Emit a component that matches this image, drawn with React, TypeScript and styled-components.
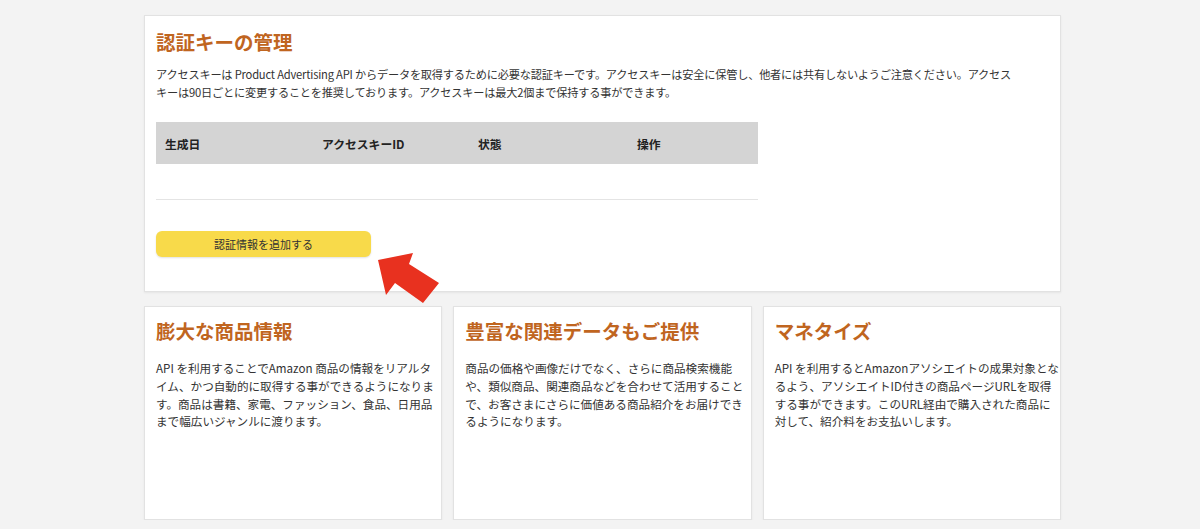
import React from 'react';
import styled, { createGlobalStyle } from 'styled-components';

const GlobalStyle = createGlobalStyle`
  html, body {
    margin: 0;
    padding: 0;
    background: #f3f3f3;
    font-family: "Noto Sans CJK JP", "Noto Sans", sans-serif;
    color: #333;
  }
`;

const Page = styled.div`
  padding: 15px 0 0 144px;
`;

const Container = styled.div`
  position: relative;
  width: 917px;
`;

const Card = styled.section`
  box-sizing: border-box;
  min-width: 0;
  background: #fff;
  border: 1px solid #e2e2e2;
  box-shadow: 0 1px 2px rgba(0, 0, 0, 0.06);
`;

const MainCard = styled(Card)`
  height: 277px;
  padding: 11px 11px 0;
`;

const Title = styled.h2`
  margin: 0;
  font-size: 19.5px;
  line-height: 30px;
  font-weight: 700;
  color: #c0651f;
`;

const Lead = styled.p`
  margin: 9px 0 0;
  font-size: 11.2px;
  line-height: 17.5px;
  letter-spacing: -0.2px;
  white-space: nowrap;
`;

const Table = styled.div`
  width: 602px;
  margin-top: 21px;
  border-bottom: 1px solid #e4e4e4;
`;

const HeadRow = styled.div`
  display: grid;
  grid-template-columns: 157px 156px 159px 1fr;
  height: 42px;
  align-items: center;
  background: #d4d4d4;
`;

const HeadCell = styled.div`
  padding-left: 9px;
  font-size: 11.8px;
  font-weight: 700;
  color: #222;
`;

const EmptyRow = styled.div`
  height: 35px;
`;

const AddButton = styled.button`
  display: block;
  width: 215px;
  height: 26px;
  margin-top: 31px;
  border: none;
  border-radius: 6px;
  background: #f8da4a;
  box-shadow: 0 1px 2px rgba(0, 0, 0, 0.12);
  font-family: inherit;
  font-size: 11px;
  color: #333;
  cursor: pointer;
`;

const Arrow = styled.svg`
  position: absolute;
  left: 226px;
  top: 233px;
  width: 75px;
  height: 60px;
`;

const Features = styled.div`
  display: grid;
  grid-template-columns: repeat(3, minmax(0, 1fr));
  gap: 11px;
  margin-top: 14px;
`;

const FeatureCard = styled(Card)`
  height: 214px;
  padding: 9px 11px 0;
  overflow: hidden;
`;

const Body = styled.p`
  margin: 14px 0 0;
  font-size: 11.6px;
  line-height: 17.8px;
  white-space: nowrap;
`;

const features = [
  {
    title: '膨大な商品情報',
    lines: [
      'API を利用することでAmazon 商品の情報をリアルタ',
      'イム、かつ自動的に取得する事ができるようになりま',
      'す。商品は書籍、家電、ファッション、食品、日用品',
      'まで幅広いジャンルに渡ります。',
    ],
  },
  {
    title: '豊富な関連データもご提供',
    lines: [
      '商品の価格や画像だけでなく、さらに商品検索機能',
      'や、類似商品、関連商品などを合わせて活用すること',
      'で、お客さまにさらに価値ある商品紹介をお届けでき',
      'るようになります。',
    ],
  },
  {
    title: 'マネタイズ',
    lines: [
      'API を利用するとAmazonアソシエイトの成果対象とな',
      'るよう、アソシエイトID付きの商品ページURLを取得',
      'する事ができます。このURL経由で購入された商品に',
      '対して、紹介料をお支払いします。',
    ],
  },
];

const App: React.FC = () => (
  <Page>
    <GlobalStyle />
    <Container>
      <MainCard>
        <Title>認証キーの管理</Title>
        <Lead>
          アクセスキーは Product Advertising API からデータを取得するために必要な認証キーです。アクセスキーは安全に保管し、他者には共有しないようご注意ください。アクセス
          <br />
          キーは90日ごとに変更することを推奨しております。アクセスキーは最大2個まで保持する事ができます。
        </Lead>
        <Table>
          <HeadRow>
            <HeadCell>生成日</HeadCell>
            <HeadCell>アクセスキーID</HeadCell>
            <HeadCell>状態</HeadCell>
            <HeadCell>操作</HeadCell>
          </HeadRow>
          <EmptyRow />
        </Table>
        <AddButton>認証情報を追加する</AddButton>
      </MainCard>
      <Features>
        {features.map(f => (
          <FeatureCard key={f.title}>
            <Title>{f.title}</Title>
            <Body>
              {f.lines.map((l, i) => (
                <React.Fragment key={i}>
                  {l}
                  {i < f.lines.length - 1 && <br />}
                </React.Fragment>
              ))}
            </Body>
          </FeatureCard>
        ))}
      </Features>
      <Arrow viewBox="0 0 75 60">
        <polygon
          points="8,12 43,5 39,16 69,35 53,55 25,35 16,47"
          fill="#e8311f"
        />
      </Arrow>
    </Container>
  </Page>
);

export default App;
